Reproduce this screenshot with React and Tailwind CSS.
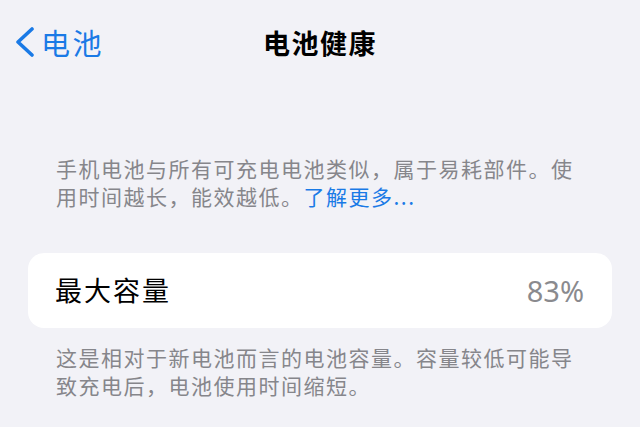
import React from 'react';

export default function App() {
    return (
        <div className="w-[640px] h-[427px] overflow-hidden bg-[#f2f2f7] font-['Noto_Sans_CJK_SC',sans-serif]">
            <div className="grid grid-cols-[1fr_auto_1fr] items-center h-[84px]">
                <div className="flex items-center pl-[14px] gap-[5px] text-[#1a7ae6]">
                    <svg width="22" height="30" viewBox="0 0 22 30" fill="none">
                        <polyline points="18,2 4,15 18,28" stroke="currentColor" strokeWidth="3.6" strokeLinecap="round" strokeLinejoin="round" />
                    </svg>
                    <span className="text-[29px] leading-none tracking-[2.5px]">电池</span>
                </div>
                <h1 className="text-[27px] leading-none font-bold tracking-[1.5px] text-black">电池健康</h1>
                <div />
            </div>

            <p className="pt-[70px] px-[56px] text-[21px] leading-[28px] tracking-[1.5px] text-[#86868b]">
                手机电池与所有可充电电池类似，属于易耗部件。使<br />
                用时间越长，能效越低。<span className="text-[#1a7ae6]">了解更多...</span>
            </p>

            <div className="mt-[43px] mx-[28px] h-[75px] bg-white rounded-[16px] pl-[27px] pr-[28px] flex items-center justify-between">
                <span className="text-[27px] tracking-[2px] text-black">最大容量</span>
                <span className="text-[29px] font-['Noto_Sans',sans-serif] text-[#8a8a8e]">83%</span>
            </div>

            <p className="mt-[15px] px-[56px] text-[21px] leading-[28px] tracking-[1.5px] text-[#86868b]">
                这是相对于新电池而言的电池容量。容量较低可能导<br />
                致充电后，电池使用时间缩短。
            </p>
        </div>
    );
}
